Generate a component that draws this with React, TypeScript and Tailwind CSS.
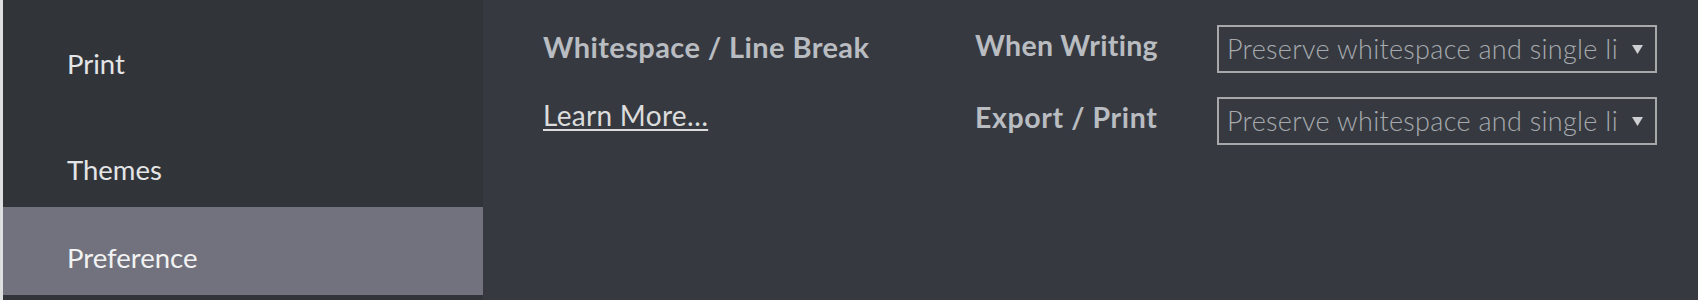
import React from "react";

const font = { fontFamily: '"Lato", "Noto Sans", sans-serif' };

function SidebarItem({ label, active, className }: { label: string; active?: boolean; className: string }) {
  return (
    <div className={`${className} pl-[64px] text-[27.5px] leading-[33px] ${active ? "bg-[#71727e] text-[#f2f2f2]" : "text-[#e4e5e6]"}`}>
      {label}
    </div>
  );
}

function Select({ value }: { value: string }) {
  return (
    <div className="flex h-[48px] w-[440px] items-center border-2 border-[#a7a8aa] bg-[#363a40]">
      <div className="w-[400px] overflow-hidden whitespace-nowrap pl-[8px] text-[27px] font-light leading-[44px] tracking-[0.3px] text-[#a7aaaf]">
        {value}
      </div>
      <div className="flex flex-1 items-center justify-end pr-[12px]">
        <svg width="11" height="9" viewBox="0 0 11 9" className="mt-[1px]">
          <polygon points="0,0 11,0 5.5,9" fill="#cdcfd2" />
        </svg>
      </div>
    </div>
  );
}

export default function App() {
  return (
    <div className="flex h-[300px] w-[1698px] overflow-hidden bg-[#363a40]" style={font}>
      <div className="w-[3px] shrink-0 bg-[#dedfe0]" />
      <nav className="flex w-[480px] shrink-0 flex-col bg-[#313439]">
        <SidebarItem label="Print" className="h-[119px] pt-[47px]" />
        <SidebarItem label="Themes" className="h-[88px] pt-[34px]" />
        <SidebarItem label="Preference" active className="h-[88px] pt-[34px]" />
      </nav>
      <main className="flex-1 pl-[60px] pt-[25px]">
        <div className="grid grid-cols-[432px_242px_440px] grid-rows-[48px_48px] gap-y-[24px]">
          <div className="whitespace-nowrap text-[29px] font-bold leading-[44px] tracking-[0.4px] text-[#b9bcc1]">
            Whitespace / Line Break
          </div>
          <div className="whitespace-nowrap text-[28.5px] font-bold leading-[40px] tracking-[0.3px] text-[#b9bcc1]">
            When Writing
          </div>
          <Select value="Preserve whitespace and single line breaks" />

          <div className="text-[28px] leading-[36px] tracking-[0.3px] text-[#dcdcdd]">
            <span className="underline decoration-2 underline-offset-[3px]">Learn More…</span>
          </div>
          <div className="whitespace-nowrap text-[28.5px] font-bold leading-[40px] tracking-[0.6px] text-[#b9bcc1]">
            Export / Print
          </div>
          <Select value="Preserve whitespace and single line breaks" />
        </div>
      </main>
    </div>
  );
}
